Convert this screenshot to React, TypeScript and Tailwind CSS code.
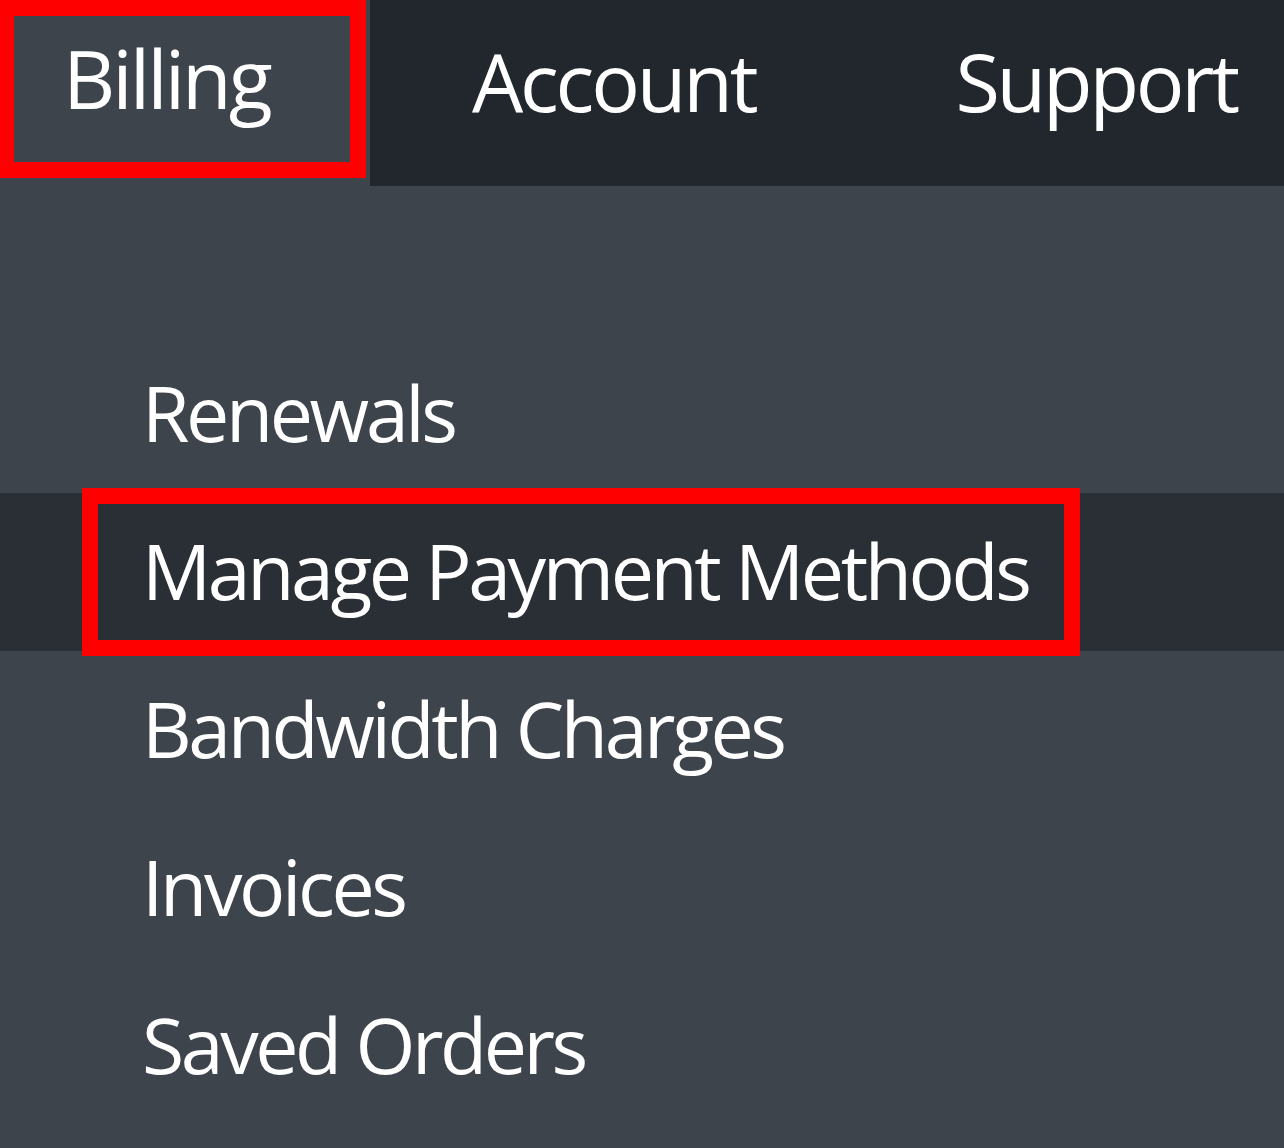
const items = ["Renewals", "Manage Payment Methods", "Bandwidth Charges", "Invoices", "Saved Orders"];

export default function App() {
  return (
    <div className="w-[1284px] h-[1148px] overflow-hidden bg-[#3e444c] text-white font-['Open_Sans',sans-serif]">
      <div className="flex h-[186px]">
        <div className="w-[370px] shrink-0">
          <div className="w-[366px] h-[178px] border-[16px] border-l-[14px] border-[#ff0000] flex items-center pl-[49px] pb-[24px] text-[81px] leading-none tracking-[-3px]">
            Billing
          </div>
        </div>
        <div className="flex-1 bg-[#22272e] flex items-center pb-[26px] text-[81px] leading-none tracking-[-3.2px]">
          <span className="ml-[102px]">Account</span>
          <span className="ml-[200px]">Support</span>
        </div>
      </div>
      <div className="pt-[149px]">
        {items.map((item) => {
          const active = item === "Manage Payment Methods";
          return (
            <div key={item} className={"h-[158px] flex items-center " + (active ? "bg-[#2a2e35]" : "")}>
              <div
                className={
                  "ml-[82px] h-[168px] flex items-center pl-[44px] pr-[36px] pb-[4px] text-[77px] leading-none tracking-[-3.4px] border-[16px] " +
                  (active ? "border-[#ff0000]" : "border-transparent")
                }
              >
                {item}
              </div>
            </div>
          );
        })}
      </div>
    </div>
  );
}
